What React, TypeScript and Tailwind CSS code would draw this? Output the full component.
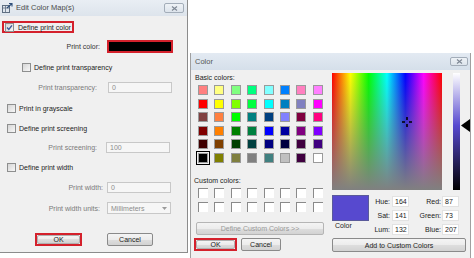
import React from "react";

const BASIC = [
  ["#ff8080", "#ffff80", "#80ff80", "#00ff80", "#80ffff", "#0080ff", "#ff80c0", "#ff80ff"],
  ["#ff0000", "#ffff00", "#80ff00", "#00ff40", "#00ffff", "#0080c0", "#8080c0", "#ff00ff"],
  ["#804040", "#ff8040", "#00ff00", "#008080", "#004080", "#8080ff", "#800040", "#ff0080"],
  ["#800000", "#ff8000", "#008000", "#008040", "#0000ff", "#0000a0", "#800080", "#8000ff"],
  ["#400000", "#804000", "#004000", "#004040", "#000080", "#000040", "#400040", "#400080"],
  ["#000000", "#808000", "#808040", "#808080", "#408080", "#c0c0c0", "#400040", "#ffffff"],
];

function Check({ checked }: { checked?: boolean }) {
  return (
    <span className="flex h-[9px] w-[9px] shrink-0 items-center justify-center border border-[#8e8f8f] bg-[linear-gradient(135deg,#d6d6d6,#f7f7f7)]">
      {checked && (
        <svg width="7" height="7" viewBox="0 0 7 7">
          <path d="M1 3.6 L2.8 5.4 L6 1.4" fill="none" stroke="#3c5a9a" strokeWidth="1.4" />
        </svg>
      )}
    </span>
  );
}

function CloseBox({ className = "" }: { className?: string }) {
  return (
    <span className={`flex items-center justify-center rounded-[2px] border border-[#a3adb9] bg-[linear-gradient(#eef2f6,#dde4ec)] ${className}`}>
      <svg width="7" height="5" viewBox="0 0 7 5">
        <path d="M1 0.5 L6 4.5 M6 0.5 L1 4.5" stroke="#7d8693" strokeWidth="1.1" />
      </svg>
    </span>
  );
}

function Btn({ children, className = "", disabled }: { children: React.ReactNode; className?: string; disabled?: boolean }) {
  return (
    <div
      className={`flex items-center justify-center rounded-[2px] border border-[#8a8a8a] bg-[linear-gradient(#f4f4f4,#ececec_50%,#dedede_50%,#d2d2d2)] ${
        disabled ? "text-[#9a9a9a] border-[#b5b5b5]" : "text-[#222]"
      } ${className}`}
    >
      {children}
    </div>
  );
}

function Field({ value, className = "" }: { value: string; className?: string }) {
  return (
    <div className={`flex h-[11px] w-[64px] items-center border border-[#c8c8c8] bg-[#f6f6f6] pl-[3px] text-[#8c8c8c] ${className}`}>
      {value}
    </div>
  );
}

function EditColorMap() {
  return (
    <div className="flex h-[253px] w-[188px] shrink-0 flex-col border-b border-r border-[#8c8c8c] bg-[#f0f0f0]">
      <div className="flex h-[16px] items-center bg-[linear-gradient(#e9eef4,#dde4ec)] pl-[2px] pr-[3px]">
        <svg width="11" height="10" viewBox="0 0 11 10">
          <rect x="0.5" y="2.5" width="7" height="7" fill="#dfe6ee" stroke="#5f6f82" />
          <path d="M0.5 5 H7.5 M3.5 2.5 V9.5" stroke="#5f6f82" strokeWidth="0.8" />
          <path d="M5 5 L10 0.5 M7 0.5 H10 V3.5" fill="none" stroke="#2f4f7a" strokeWidth="1.1" />
        </svg>
        <span className="ml-[3px] text-[7.5px] text-[#4a4a4a]">Edit Color Map(s)</span>
        <CloseBox className="ml-auto h-[10px] w-[20px]" />
      </div>

      <div className="ml-[2px] mt-[5px] flex h-[12px] w-[72px] items-center border-2 border-[#d4212c] pl-[1px]">
        <Check checked />
        <span className="ml-[4px] text-[#222]">Define print color</span>
      </div>

      <div className="mt-[7px] flex h-[13px] items-center">
        <span className="w-[100px] text-right text-[#333]">Print color:</span>
        <div className="ml-[7px] h-[13px] w-[66px] border-2 border-[#d4212c] bg-black" />
      </div>

      <div className="ml-[22px] mt-[9px] flex h-[11px] items-center">
        <Check />
        <span className="ml-[3px] text-[#222]">Define print transparency</span>
      </div>

      <div className="mt-[8px] flex h-[12px] items-center">
        <span className="w-[97px] text-right text-[#7a7a7a]">Print transparency:</span>
        <Field value="0" className="ml-[11px]" />
      </div>

      <div className="ml-[7px] mt-[10px] flex h-[10px] items-center">
        <Check />
        <span className="ml-[3px] text-[#222]">Print in grayscale</span>
      </div>

      <div className="ml-[7px] mt-[10px] flex h-[10px] items-center">
        <Check />
        <span className="ml-[3px] text-[#222]">Define print screening</span>
      </div>

      <div className="mt-[9px] flex h-[11px] items-center">
        <span className="w-[97px] text-right text-[#7a7a7a]">Print screening:</span>
        <Field value="100" className="ml-[9px]" />
      </div>

      <div className="ml-[7px] mt-[9px] flex h-[10px] items-center">
        <Check />
        <span className="ml-[3px] text-[#222]">Define print width</span>
      </div>

      <div className="mt-[10px] flex h-[11px] items-center">
        <span className="w-[103px] text-right text-[#7a7a7a]">Print width:</span>
        <Field value="0" className="ml-[4px]" />
      </div>

      <div className="mt-[9px] flex h-[12px] items-center">
        <span className="w-[100px] text-right text-[#7a7a7a]">Print width units:</span>
        <div className="ml-[7px] flex h-[12px] w-[64px] items-center border border-[#c8c8c8] bg-[#f6f6f6] pl-[3px] text-[#8c8c8c]">
          Millimeters
          <svg className="ml-auto mr-[3px]" width="5" height="3" viewBox="0 0 5 3">
            <path d="M0 0 H5 L2.5 3 Z" fill="#9a9a9a" />
          </svg>
        </div>
      </div>

      <div className="mt-[19px] flex h-[13px] items-center">
        <div className="ml-[35px] flex h-[13px] w-[47px] border-2 border-[#d4212c]">
          <Btn className="h-full w-full border-[#b0b0b0]">OK</Btn>
        </div>
        <Btn className="ml-[25px] h-[13px] w-[46px]">Cancel</Btn>
      </div>
    </div>
  );
}

function Spectrum() {
  return (
    <svg width="110" height="117" viewBox="0 0 110 117" className="block shrink-0">
      <defs>
        <linearGradient id="hue" x1="0" y1="0" x2="1" y2="0">
          <stop offset="0" stopColor="#ff0000" />
          <stop offset="0.167" stopColor="#ffff00" />
          <stop offset="0.333" stopColor="#00ff00" />
          <stop offset="0.5" stopColor="#00ffff" />
          <stop offset="0.667" stopColor="#0000ff" />
          <stop offset="0.833" stopColor="#ff00ff" />
          <stop offset="1" stopColor="#ff0000" />
        </linearGradient>
        <linearGradient id="sat" x1="0" y1="0" x2="0" y2="1">
          <stop offset="0" stopColor="#808080" stopOpacity="0" />
          <stop offset="1" stopColor="#808080" stopOpacity="1" />
        </linearGradient>
      </defs>
      <rect width="110" height="117" fill="url(#hue)" />
      <rect width="110" height="117" fill="url(#sat)" />
      <path d="M75 44 V47 M75 51 V54 M70 49 H73 M77 49 H80" stroke="#000" strokeWidth="1.6" />
    </svg>
  );
}

function LumBar() {
  return (
    <svg width="7" height="117" viewBox="0 0 7 117" className="block shrink-0">
      <defs>
        <linearGradient id="lum" x1="0" y1="0" x2="0" y2="1">
          <stop offset="0" stopColor="#ffffff" />
          <stop offset="0.45" stopColor="#5749cf" />
          <stop offset="1" stopColor="#000000" />
        </linearGradient>
      </defs>
      <rect width="7" height="117" fill="url(#lum)" />
    </svg>
  );
}

function NumBox({ value }: { value: string }) {
  return <div className="flex h-[11px] w-[17px] items-center border border-[#e2e2e2] bg-white pl-[2px] text-[#222]">{value}</div>;
}

function ColorDialog() {
  return (
    <div className="ml-[2px] mt-[53px] flex h-[205px] w-[281px] shrink-0 flex-col border-l border-r border-[#a0a0a0] bg-[#f0f0f0]">
      <div className="flex h-[17px] items-center bg-[linear-gradient(#e3eaf2,#d5dfea)] pl-[4px] pr-[2px]">
        <span className="text-[7.5px] text-[#555]">Color</span>
        <CloseBox className="ml-auto h-[9px] w-[18px]" />
      </div>

      <div className="flex">
        <div className="flex w-[144px] flex-col">
          <div className="ml-[4px] mt-[2px] flex h-[10px] items-center text-[#222]">Basic colors:</div>
          <div className="ml-[7px] mt-[3px] grid grid-cols-[repeat(8,10px)] gap-x-[6.4px] gap-y-[3.6px]">
            {BASIC.flat().map((c, i) => (
              <div key={i} className="relative h-[10px] w-[10px] border border-[#9a9a9a]" style={{ backgroundColor: c }}>
                {i === 40 && <div className="absolute -inset-[3px] border border-black" />}
              </div>
            ))}
          </div>
          <div className="ml-[3px] mt-[13px] flex h-[10px] items-center text-[#222]">Custom colors:</div>
          <div className="ml-[7px] mt-[2px] grid grid-cols-[repeat(8,10px)] gap-x-[6.4px] gap-y-[3.5px]">
            {Array.from({ length: 16 }).map((_, i) => (
              <div key={i} className="h-[10.5px] w-[10px] border-l border-t border-[#8a8a8a] bg-white" />
            ))}
          </div>
          <Btn disabled className="ml-[5px] mt-[10px] h-[13px] w-[128px]">
            Define Custom Colors &gt;&gt;
          </Btn>
          <div className="mt-[3px] flex h-[13px] items-center">
            <div className="ml-[3px] flex h-[13px] w-[43px] border-2 border-[#d4212c]">
              <Btn className="h-full w-full border-[#b0b0b0]">OK</Btn>
            </div>
            <Btn className="ml-[4px] h-[13px] w-[40px]">Cancel</Btn>
          </div>
        </div>

        <div className="flex flex-col">
          <div className="mt-[3px] flex">
            <Spectrum />
            <div className="ml-[11px]">
              <LumBar />
            </div>
            <svg className="ml-[1px] mt-[46px] shrink-0" width="9" height="13" viewBox="0 0 9 13">
              <path d="M0 6.5 L9 0 V13 Z" fill="#000" />
            </svg>
          </div>

          <div className="mt-[5px] flex">
            <div className="flex w-[37px] flex-col">
              <div className="h-[26px] w-[37px] border border-[#5a5a9a] bg-[#5749cf]" />
              <span className="ml-[3px] mt-[1px] text-[#222]">Color</span>
            </div>
            <div className="mt-[1px] flex flex-col gap-[3px]">
              {[
                ["Hue:", "164"],
                ["Sat:", "141"],
                ["Lum:", "132"],
              ].map(([l, v]) => (
                <div key={l} className="flex h-[11px] items-center">
                  <span className="w-[21px] text-right text-[#222]">{l}</span>
                  <span className="ml-[2px]">
                    <NumBox value={v} />
                  </span>
                </div>
              ))}
            </div>
            <div className="mt-[1px] flex flex-col gap-[3px]">
              {[
                ["Red:", "87"],
                ["Green:", "73"],
                ["Blue:", "207"],
              ].map(([l, v]) => (
                <div key={l} className="flex h-[11px] items-center">
                  <span className="w-[32px] text-right text-[#222]">{l}</span>
                  <span className="ml-[1px]">
                    <NumBox value={v} />
                  </span>
                </div>
              ))}
            </div>
          </div>

          <Btn className="mt-[3px] h-[14px] w-[134px]">Add to Custom Colors</Btn>
        </div>
      </div>
    </div>
  );
}

export default function App() {
  return (
    <div className="flex h-[258px] w-[474px] overflow-hidden bg-white font-['Liberation_Sans',Arial,sans-serif] text-[7px] leading-none">
      <EditColorMap />
      <ColorDialog />
    </div>
  );
}
